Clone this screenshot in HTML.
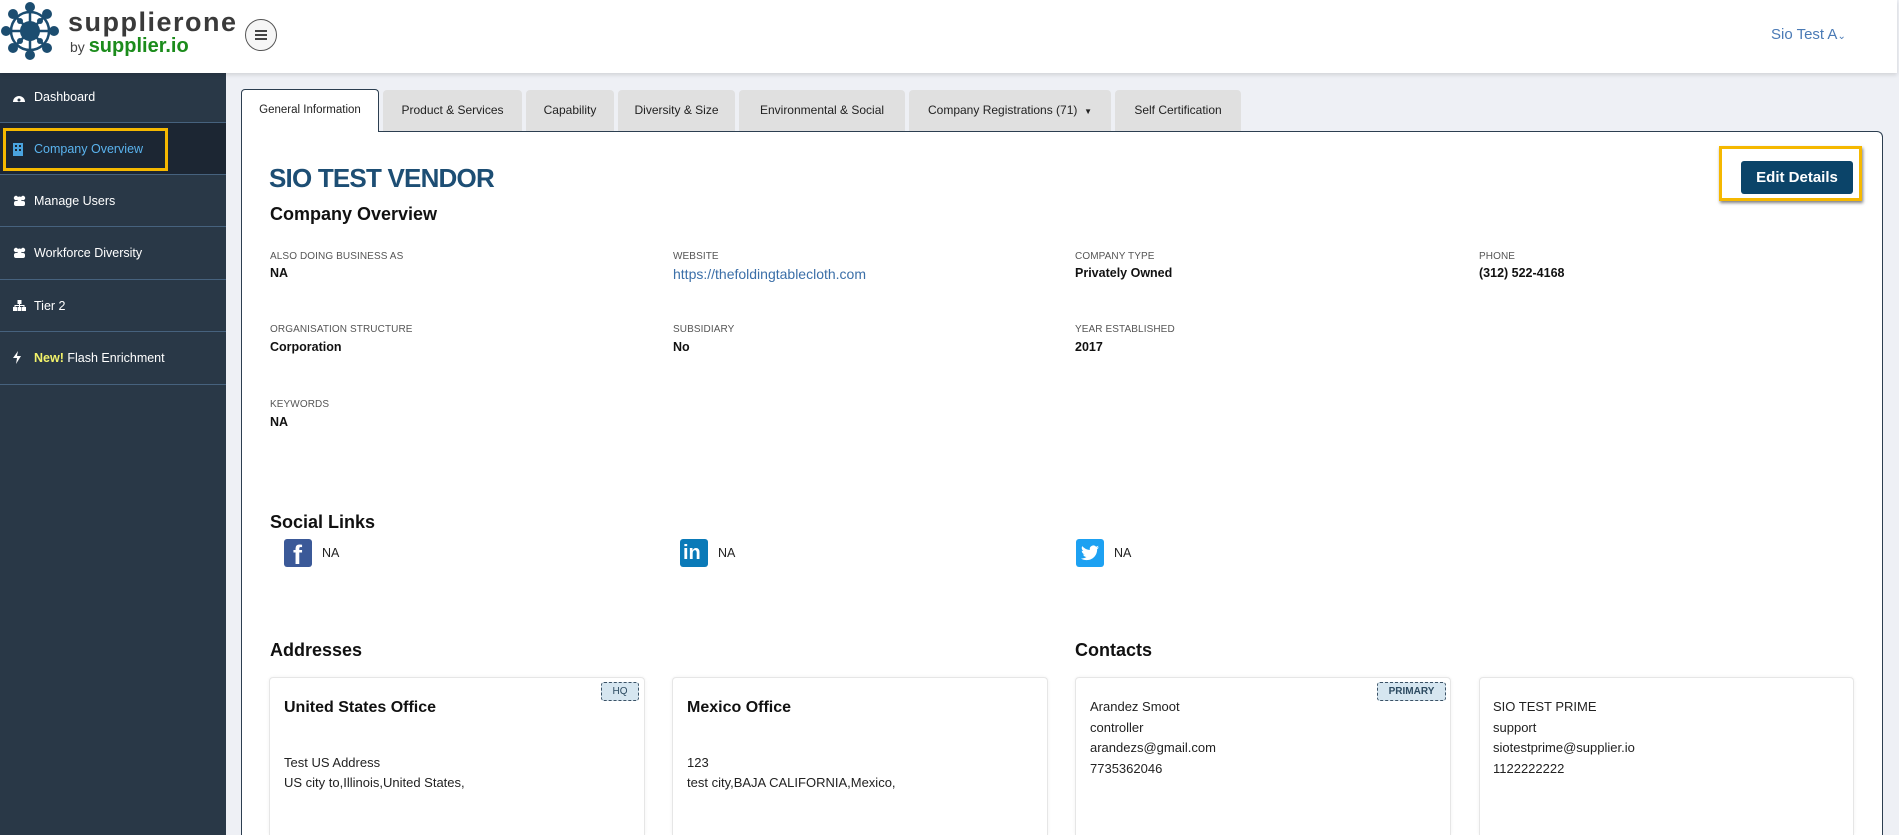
<!DOCTYPE html>
<html style="overflow:hidden;height:835px"><head><meta charset="utf-8"><style>
*{box-sizing:border-box;margin:0;padding:0}
body{width:1899px;height:835px;overflow:hidden;background:#eef0f5;font-family:"Liberation Sans",sans-serif;position:relative;color:#111}
.hdr{position:absolute;left:0;top:0;width:1897px;height:73px;background:#fff;box-shadow:0 2px 4px rgba(0,0,0,.12);z-index:2}
.side{position:absolute;left:0;top:73px;width:226px;height:762px;background:#293847}
.item{position:absolute;left:0;width:226px;border-bottom:1px solid #46627e;color:#fff;font-size:12.5px}
.item span.t{position:absolute;left:34px}
.item svg{position:absolute;left:13px}
.tab{position:absolute;top:90px;height:41px;background:#e0e0e0;border-radius:4px 4px 0 0;font-size:12px;color:#222;text-align:center;line-height:40px}
.card{position:absolute;left:241px;top:131px;width:1642px;height:704px;background:#fff;border:1px solid #2c3e50;border-bottom:none;border-radius:0 6px 0 0}
.lbl{position:absolute;font-size:10px;color:#555;letter-spacing:.1px}
.val{position:absolute;font-size:12.5px;font-weight:bold;color:#111}
.h2{position:absolute;font-size:18px;font-weight:bold;color:#111}
.bx{position:absolute;top:677px;height:158px;background:#fff;border:1px solid #e6e6e6;border-bottom:none;border-radius:4px 4px 0 0;box-shadow:0 0 3px rgba(0,0,0,.06)}
.ln{position:absolute;font-size:13px;color:#222}
.badge{position:absolute;top:682px;height:19px;background:#d6e6f0;border:1px dashed #3b5266;border-radius:3px;font-size:10px;color:#2c4a60;text-align:center;line-height:17px}
.soc{position:absolute;top:539px;width:28px;height:28px;border-radius:3px}
.na{position:absolute;top:546px;font-size:12.5px;color:#222}
</style></head><body>
<div class="hdr">
 <svg style="position:absolute;left:1px;top:2px" width="58" height="58" viewBox="0 0 58 58">
  <g stroke="#1c4d70" stroke-width="2.5" fill="none">
   <circle cx="29" cy="29" r="19"/>
   <line x1="29" y1="4" x2="29" y2="54"/><line x1="4" y1="29" x2="54" y2="29"/>
   <line x1="11" y1="11" x2="47" y2="47"/><line x1="47" y1="11" x2="11" y2="47"/>
  </g>
  <g fill="#1c4d70">
   <circle cx="29" cy="29" r="10"/>
   <circle cx="29" cy="5" r="5"/><circle cx="29" cy="53" r="5"/><circle cx="5" cy="29" r="5"/><circle cx="53" cy="29" r="5"/>
   <circle cx="12" cy="12" r="5"/><circle cx="46" cy="12" r="5"/><circle cx="12" cy="46" r="5"/><circle cx="46" cy="46" r="5"/>
   <circle cx="19" cy="19" r="3"/><circle cx="39" cy="19" r="3"/><circle cx="19" cy="39" r="3"/><circle cx="39" cy="39" r="3"/>
  </g>
 </svg>
 <div style="position:absolute;left:68px;top:7px;font-size:27px;font-weight:bold;color:#3a3a3a;letter-spacing:1.5px">supplierone</div>
 <div style="position:absolute;left:70px;top:35px;font-size:14px;color:#444">by <span style="font-size:20px;font-weight:bold;color:#1c8c1c">supplier.io</span></div>
 <div style="position:absolute;left:245px;top:19px;width:32px;height:32px;border:1px solid #555;border-radius:50%;background:#f6f6f6">
  <div style="position:absolute;left:9px;top:10px;width:12px;height:2px;background:#444;box-shadow:0 4px 0 #444,0 8px 0 #444"></div>
 </div>
 <div style="position:absolute;left:1771px;top:26px;font-size:15px;color:#4a7ab5">Sio Test A<span style="font-size:10px">⌄</span></div>
</div>
<div class="side">
 <div class="item" style="top:0;height:50px"><svg style="top:19px" width="12" height="11" viewBox="0 0 12 11"><path d="M0 10A6 6 0 1 1 12 10Z" fill="#fff"/><circle cx="6" cy="8" r="1.5" fill="#293847"/></svg><span class="t" style="top:17px">Dashboard</span></div>
 <div class="item" style="top:50px;height:52px;background:#1c2633"><div style="position:absolute;left:3px;top:5px;width:165px;height:43px;border:3px solid #f5b800"></div><svg style="top:20px" width="10" height="13" viewBox="0 0 10 13"><rect width="10" height="13" fill="#4aa3df"/><rect x="2" y="2" width="2" height="2" fill="#1c2633"/><rect x="6" y="2" width="2" height="2" fill="#1c2633"/><rect x="2" y="6" width="2" height="2" fill="#1c2633"/><rect x="6" y="6" width="2" height="2" fill="#1c2633"/></svg><span class="t" style="top:19px;color:#5ab3ee">Company Overview</span></div>
 <div class="item" style="top:102px;height:52px"><svg style="top:20px" width="13" height="11" viewBox="0 0 13 11"><circle cx="3" cy="3" r="2.2" fill="#fff"/><circle cx="10" cy="3" r="2.2" fill="#fff"/><circle cx="6.5" cy="4" r="2.5" fill="#fff"/><rect x="1" y="6" width="11" height="5" rx="2" fill="#fff"/></svg><span class="t" style="top:19px">Manage Users</span></div>
 <div class="item" style="top:154px;height:53px"><svg style="top:20px" width="13" height="11" viewBox="0 0 13 11"><circle cx="3" cy="3" r="2.2" fill="#fff"/><circle cx="10" cy="3" r="2.2" fill="#fff"/><circle cx="6.5" cy="4" r="2.5" fill="#fff"/><rect x="1" y="6" width="11" height="5" rx="2" fill="#fff"/></svg><span class="t" style="top:19px">Workforce Diversity</span></div>
 <div class="item" style="top:207px;height:52px"><svg style="top:20px" width="13" height="11" viewBox="0 0 13 11"><rect x="4.5" y="0" width="4" height="4" fill="#fff"/><rect x="0" y="7" width="4" height="4" fill="#fff"/><rect x="4.5" y="7" width="4" height="4" fill="#fff"/><rect x="9" y="7" width="4" height="4" fill="#fff"/><path d="M2 7V5.5H11V7M6.5 4V7" stroke="#fff" fill="none"/></svg><span class="t" style="top:19px">Tier 2</span></div>
 <div class="item" style="top:259px;height:53px"><svg style="top:19px" width="8" height="13" viewBox="0 0 8 13"><path d="M5 0L0 7H4L3 13L8 5H4Z" fill="#fff"/></svg><span class="t" style="top:19px"><b style="color:#f2f26a">New!</b> Flash Enrichment</span></div>
</div>
<div class="tab" style="left:241px;top:89px;width:138px;height:43px;background:#fff;border:1px solid #2c3e50;border-bottom:none;z-index:3;font-size:11.5px">General Information</div>
<div class="tab" style="left:383px;width:139px">Product &amp; Services</div>
<div class="tab" style="left:526px;width:88px">Capability</div>
<div class="tab" style="left:618px;width:117px">Diversity &amp; Size</div>
<div class="tab" style="left:739px;width:166px">Environmental &amp; Social</div>
<div class="tab" style="left:909px;width:202px">Company Registrations (71) &nbsp;<span style="font-size:8px">▼</span></div>
<div class="tab" style="left:1115px;width:126px">Self Certification</div>
<div class="card"></div>
<div style="position:absolute;left:269px;top:163px;font-size:26px;font-weight:bold;color:#1d4e74;letter-spacing:-.8px">SIO TEST VENDOR</div>
<div class="h2" style="left:270px;top:204px">Company Overview</div>
<div style="position:absolute;left:1719px;top:146px;width:143px;height:55px;border:3px solid #f5b800;box-shadow:1px 2px 3px rgba(0,0,0,.5)"></div>
<div style="position:absolute;left:1741px;top:161px;width:112px;height:33px;background:#0b4469;border-radius:3px;color:#fff;font-size:15px;font-weight:bold;text-align:center;line-height:33px">Edit Details</div>

<div class="lbl" style="left:270px;top:251px">ALSO DOING BUSINESS AS</div><div class="val" style="left:270px;top:266px">NA</div>
<div class="lbl" style="left:673px;top:251px">WEBSITE</div><div class="val" style="left:673px;top:266px;font-weight:normal;color:#3b6fa8;font-size:14px">https://thefoldingtablecloth.com</div>
<div class="lbl" style="left:1075px;top:251px">COMPANY TYPE</div><div class="val" style="left:1075px;top:266px">Privately Owned</div>
<div class="lbl" style="left:1479px;top:251px">PHONE</div><div class="val" style="left:1479px;top:266px">(312) 522-4168</div>
<div class="lbl" style="left:270px;top:324px">ORGANISATION STRUCTURE</div><div class="val" style="left:270px;top:340px">Corporation</div>
<div class="lbl" style="left:673px;top:324px">SUBSIDIARY</div><div class="val" style="left:673px;top:340px">No</div>
<div class="lbl" style="left:1075px;top:324px">YEAR ESTABLISHED</div><div class="val" style="left:1075px;top:340px">2017</div>
<div class="lbl" style="left:270px;top:399px">KEYWORDS</div><div class="val" style="left:270px;top:415px">NA</div>

<div class="h2" style="left:270px;top:512px">Social Links</div>
<div class="soc" style="left:284px;background:#3b5998"><span style="position:absolute;left:9px;top:1px;color:#fff;font-weight:bold;font-size:27px">f</span></div><div class="na" style="left:322px">NA</div>
<div class="soc" style="left:680px;background:#0a7ab8"><span style="position:absolute;left:3px;top:3px;color:#fff;font-weight:bold;font-size:20px">in</span></div><div class="na" style="left:718px">NA</div>
<div class="soc" style="left:1076px;background:#1da1f2"><svg style="position:absolute;left:5px;top:6px" width="18" height="16" viewBox="0 0 24 20"><path d="M24 2.4a10 10 0 0 1-2.8.8A5 5 0 0 0 23.3.4a10 10 0 0 1-3.1 1.2A4.9 4.9 0 0 0 11.8 6 14 14 0 0 1 1.7.9a4.9 4.9 0 0 0 1.5 6.6A4.9 4.9 0 0 1 1 6.9a4.9 4.9 0 0 0 3.9 4.9 5 5 0 0 1-2.2.1 4.9 4.9 0 0 0 4.6 3.4A9.9 9.9 0 0 1 0 17.3 14 14 0 0 0 7.5 19.5c9.1 0 14-7.5 14-14v-.6A10 10 0 0 0 24 2.4z" fill="#fff"/></svg></div><div class="na" style="left:1114px">NA</div>

<div class="h2" style="left:270px;top:640px">Addresses</div>
<div class="h2" style="left:1075px;top:640px">Contacts</div>
<div class="bx" style="left:269px;width:376px"></div>
<div class="bx" style="left:672px;width:376px"></div>
<div class="bx" style="left:1075px;width:376px"></div>
<div class="bx" style="left:1479px;width:375px"></div>
<div class="badge" style="left:601px;width:38px">HQ</div>
<div class="badge" style="left:1377px;width:69px;font-weight:bold">PRIMARY</div>
<div class="h2" style="left:284px;top:699px;font-size:16px">United States Office</div>
<div class="h2" style="left:687px;top:699px;font-size:16px">Mexico Office</div>
<div class="ln" style="left:284px;top:755px">Test US Address</div>
<div class="ln" style="left:284px;top:775px">US city to,Illinois,United States,</div>
<div class="ln" style="left:687px;top:755px">123</div>
<div class="ln" style="left:687px;top:775px">test city,BAJA CALIFORNIA,Mexico,</div>
<div class="ln" style="left:1090px;top:699px">Arandez Smoot</div>
<div class="ln" style="left:1090px;top:720px">controller</div>
<div class="ln" style="left:1090px;top:740px">arandezs@gmail.com</div>
<div class="ln" style="left:1090px;top:761px">7735362046</div>
<div class="ln" style="left:1493px;top:699px">SIO TEST PRIME</div>
<div class="ln" style="left:1493px;top:720px">support</div>
<div class="ln" style="left:1493px;top:740px">siotestprime@supplier.io</div>
<div class="ln" style="left:1493px;top:761px">1122222222</div>
</body></html>
